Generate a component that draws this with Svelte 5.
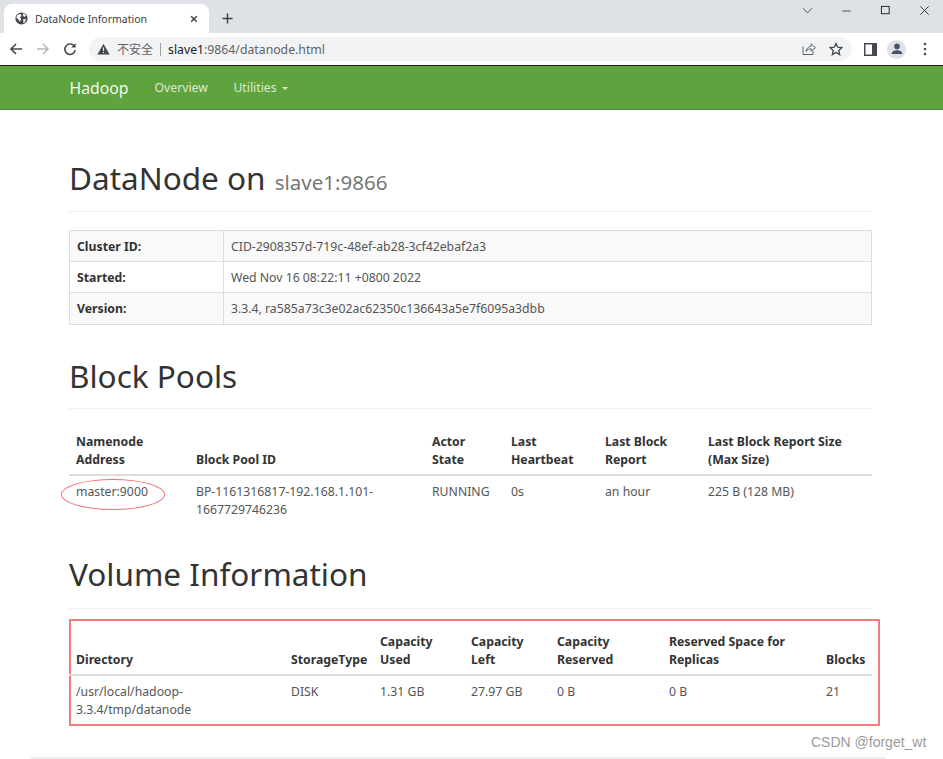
<script>
	const overview = [
		["Cluster ID:", "CID-2908357d-719c-48ef-ab28-3cf42ebaf2a3"],
		["Started:", "Wed Nov 16 08:22:11 +0800 2022"],
		["Version:", "3.3.4, ra585a73c3e02ac62350c136643a5e7f6095a3dbb"]
	];
	const poolHeads = ["Namenode Address", "Block Pool ID", "Actor State", "Last Heartbeat", "Last Block Report", "Last Block Report Size (Max Size)"];
	const poolRow = ["master:9000", "BP-1161316817-192.168.1.101-1667729746236", "RUNNING", "0s", "an hour", "225 B (128 MB)"];
	const volumeHeads = ["Directory", "StorageType", "Capacity Used", "Capacity Left", "Capacity Reserved", "Reserved Space for Replicas", "Blocks"];
	const volumeRow = ["/usr/local/hadoop-3.3.4/tmp/datanode", "DISK", "1.31 GB", "27.97 GB", "0 B", "0 B", "21"];
</script>

<div class="tabstrip">
	<div class="tab">
		<svg class="globe" viewBox="0 0 16 16" width="13" height="13"><circle cx="8" cy="8" r="7.5" fill="#45494e"/><path d="M3 3.5 7 2.5 8 5 6 6.5 7.5 8.5 6 12 4 9 1.5 7ZM10 1.5 13.5 4 12 6 10 5ZM10 9 13.5 8.5 12.5 12 10.5 14Z" fill="#fff"/></svg>
		<span class="tab-title">DataNode Information</span>
		<svg class="tab-x" viewBox="0 0 10 10" width="8" height="8"><path d="M1.5 1.5 8.5 8.5M8.5 1.5 1.5 8.5" stroke="#3c4043" stroke-width="1.8"/></svg>
	</div>
	<svg class="plus" viewBox="0 0 12 12" width="11" height="11"><path d="M6 .5V11.5M.5 6H11.5" stroke="#3c4043" stroke-width="1.6"/></svg>
	<div class="window-btns">
		<svg viewBox="0 0 12 12" width="11" height="11"><path d="M1 3.5 6 8.5 11 3.5" fill="none" stroke="#45494e" stroke-width="1"/></svg>
		<svg viewBox="0 0 12 12" width="11" height="11"><path d="M1.5 6.5H10.5" stroke="#55595e" stroke-width="1.2"/></svg>
		<svg viewBox="0 0 12 12" width="11" height="11"><rect x="1.5" y="1.5" width="8.5" height="8" fill="none" stroke="#1c1c1c" stroke-width="1"/></svg>
		<svg viewBox="0 0 12 12" width="11" height="11"><path d="M1.5 1.5 10.5 10.5M10.5 1.5 1.5 10.5" stroke="#2c2c2c" stroke-width="1"/></svg>
	</div>
</div>

<div class="toolbar">
	<svg class="nav-icon" viewBox="0 0 14 14" width="14" height="14"><path d="M13 7H2M7 2 2 7 7 12" fill="none" stroke="#45494e" stroke-width="1.6"/></svg>
	<svg class="nav-icon" viewBox="0 0 14 14" width="14" height="14"><path d="M1 7H12M7 2 12 7 7 12" fill="none" stroke="#b4b7bb" stroke-width="1.6"/></svg>
	<svg class="nav-icon" viewBox="0 0 14 14" width="14" height="14"><path d="M11.5 4.5A5.2 5.2 0 1 0 12.2 8" fill="none" stroke="#45494e" stroke-width="1.6"/><path d="M12.6 1.2V5.6H8.2Z" fill="#45494e"/></svg>
	<div class="omnibox">
		<svg viewBox="0 0 14 13" width="13" height="12"><path d="M7 .8 13.6 12.4H.4Z" fill="#45494e"/><path d="M7 4.8V8.4M7 9.4V10.8" stroke="#f1f3f4" stroke-width="1.2"/></svg>
		<span class="insecure">不安全</span>
		<span class="sep"></span>
		<span class="url"><b>slave1</b>:9864/datanode.html</span>
		<span class="grow"></span>
		<svg viewBox="0 0 14 14" width="14" height="14"><path d="M1 4.5V12.5H11V9M4 9.5C4.5 6 7 4.3 9 4.3V1.8L13.5 5.6 9 9.2V6.8C7 6.8 5.2 7.6 4 9.5Z" fill="none" stroke="#5f6368" stroke-width="1"/></svg>
		<svg class="star" viewBox="0 0 14 14" width="14" height="14"><path d="M7 1.4 8.7 5.2 12.9 5.6 9.8 8.4 10.7 12.6 7 10.4 3.3 12.6 4.2 8.4 1.1 5.6 5.3 5.2Z" fill="none" stroke="#45494e" stroke-width="1.3"/></svg>
	</div>
	<svg class="panel" viewBox="0 0 13 13" width="13" height="13"><rect x=".75" y=".75" width="11.5" height="11.5" fill="#fff" stroke="#45494e" stroke-width="1.5"/><rect x="8" y="1" width="4.5" height="11" fill="#45494e"/></svg>
	<span class="avatar">
		<svg viewBox="0 0 14 14" width="14" height="14"><circle cx="7" cy="4.4" r="2.8" fill="#47536b"/><path d="M1.6 12C1.8 9.2 4.6 8.2 7 8.2S12.2 9.2 12.4 12Z" fill="#47536b"/></svg>
	</span>
	<svg class="dots" viewBox="0 0 4 14" width="4" height="14"><circle cx="2" cy="2" r="1.3" fill="#45494e"/><circle cx="2" cy="7" r="1.3" fill="#45494e"/><circle cx="2" cy="12" r="1.3" fill="#45494e"/></svg>
</div>

<nav class="navbar">
	<span class="brand">Hadoop</span>
	<span class="nav-link">Overview</span>
	<span class="nav-link">Utilities <i class="caret"></i></span>
</nav>

<main class="container">
	<div class="page-header first">
		<h1>DataNode on <small>slave1:9866</small></h1>
	</div>

	<table class="summary">
		<tbody>
			{#each overview as [label, value]}
				<tr><th>{label}</th><td>{value}</td></tr>
			{/each}
		</tbody>
	</table>

	<div class="page-header second">
		<h1>Block Pools</h1>
	</div>

	<table class="data pools">
		<thead>
			<tr>
				{#each poolHeads as head}<th>{head}</th>{/each}
			</tr>
		</thead>
		<tbody>
			<tr>
				{#each poolRow as cell, i}
					<td>
						{cell}
						{#if i === 0}
							<span class="ring"></span>
						{/if}
					</td>
				{/each}
			</tr>
		</tbody>
	</table>

	<div class="page-header third">
		<h1>Volume Information</h1>
	</div>

	<div class="marked">
		<table class="data volumes">
			<thead>
				<tr>
					{#each volumeHeads as head}<th>{head}</th>{/each}
				</tr>
			</thead>
			<tbody>
				<tr>
					{#each volumeRow as cell}<td>{cell}</td>{/each}
				</tr>
			</tbody>
		</table>
	</div>
</main>

<div class="page-end"></div>

<span class="watermark">CSDN @forget_wt</span>

<style>
	:global(html),
	:global(body) {
		margin: 0;
		height: 100%;
		overflow: hidden;
		background: #fff;
	}

	:global(#app) {
		font-family: "Noto Sans", "Noto Sans CJK SC", sans-serif;
		color: #333;
	}

	.tabstrip {
		height: 33px;
		background: #dee1e6;
		display: flex;
		align-items: flex-start;
		box-sizing: border-box;
		padding-left: 4px;
	}

	.tab {
		width: 205px;
		height: 29px;
		margin-top: 4px;
		padding: 0 11px;
		box-sizing: border-box;
		background: #fff;
		border-radius: 8px 8px 0 0;
		display: flex;
		align-items: center;
		font-size: 10.5px;
		color: #3c4043;
	}

	.tab-title {
		margin-left: 7px;
		flex: 1;
	}

	.plus {
		margin: 13px 0 0 13px;
	}

	.window-btns {
		margin-left: auto;
		margin-top: 5px;
		width: 141.5px;
		display: flex;
		justify-content: space-between;
		padding-right: 13.5px;
		box-sizing: border-box;
	}

	.toolbar {
		height: 32px;
		background: #fff;
		display: flex;
		align-items: center;
		box-sizing: border-box;
		padding-left: 9px;
	}

	.nav-icon {
		margin-right: 13px;
	}

	.nav-icon:nth-child(3) {
		margin-right: 12px;
	}

	.omnibox {
		width: 763px;
		height: 24px;
		border-radius: 12px;
		background: #f1f3f4;
		display: flex;
		align-items: center;
		box-sizing: border-box;
		padding: 0 9px 0 8px;
		font-size: 12.25px;
		color: #5f6368;
	}

	.insecure {
		margin-left: 7px;
		font-size: 12px;
	}

	.sep {
		width: 1px;
		height: 13px;
		background: #9aa0a6;
		margin: 0 7px;
	}

	.url b {
		font-weight: 400;
		color: #202124;
	}

	.grow {
		flex: 1;
	}

	.star {
		margin-left: 13px;
	}

	.panel {
		margin-left: 12px;
	}

	.avatar {
		margin-left: 10px;
		width: 19px;
		height: 19px;
		border-radius: 50%;
		background: #dfe1e7;
		display: flex;
		align-items: center;
		justify-content: center;
	}

	.dots {
		margin-left: 17px;
	}

	.navbar {
		height: 45px;
		box-sizing: border-box;
		background: #5fa33e;
		border-top: 1px solid #1d1d1d;
		border-bottom: 1px solid #5a7f4a;
		display: flex;
		align-items: center;
		padding-left: 69.5px;
		color: #dcebd3;
		font-size: 12.25px;
	}

	.brand {
		font-size: 15.75px;
		color: #f4f9f1;
		margin-right: 26px;
	}

	.nav-link {
		margin-right: 25.5px;
	}

	.caret {
		display: inline-block;
		border-top: 3.5px solid #dcebd3;
		border-left: 3.5px solid transparent;
		border-right: 3.5px solid transparent;
		vertical-align: middle;
		margin-left: 2px;
	}

	.container {
		margin-left: 69px;
		width: 803px;
	}

	.page-header {
		border-bottom: 1px solid #eee;
		margin-bottom: 17px;
	}

	.page-header.first {
		margin-top: 50px;
		padding-bottom: 11px;
		margin-bottom: 18px;
	}

	.page-header.second {
		margin-top: 33px;
		padding-bottom: 15px;
	}

	.page-header.third {
		margin-top: 31px;
		padding-bottom: 17px;
		margin-bottom: 10px;
	}

	h1 {
		margin: 0;
		font-size: 31.5px;
		font-weight: 400;
		line-height: 35px;
		color: #333;
	}

	small {
		font-size: 20.5px;
		color: #777;
		margin-left: 1px;
	}

	table {
		width: 803px;
		border-collapse: collapse;
		table-layout: fixed;
		font-size: 12.25px;
		line-height: 17.5px;
	}

	td {
		color: #555;
	}

	.summary th,
	.summary td {
		border: 1px solid #ddd;
		padding: 6.5px 7px 6px;
		text-align: left;
	}

	.summary tr:last-child th,
	.summary tr:last-child td {
		padding-top: 7px;
		padding-bottom: 6.5px;
	}

	.summary th {
		width: 139px;
		font-weight: 700;
	}

	.summary tr:nth-child(odd) {
		background: #f9f9f9;
	}

	.data th {
		padding: 7px 7px 6px;
		text-align: left;
		vertical-align: bottom;
		font-weight: 700;
		border-bottom: 2px solid #ddd;
	}

	.data td {
		padding: 7px;
		vertical-align: top;
		position: relative;
		overflow-wrap: anywhere;
	}

	.pools th:nth-child(1) { width: 106px; }
	.pools th:nth-child(2) { width: 222px; }
	.pools th:nth-child(3) { width: 65px; }
	.pools th:nth-child(4) { width: 80px; }
	.pools th:nth-child(5) { width: 89px; }

	.volumes th:nth-child(1) { width: 201px; }
	.volumes th:nth-child(2) { width: 75px; }
	.volumes th:nth-child(3) { width: 77px; }
	.volumes th:nth-child(4) { width: 72px; }
	.volumes th:nth-child(5) { width: 98px; }
	.volumes th:nth-child(6) { width: 143px; }

	.ring {
		position: absolute;
		left: -8px;
		top: 3px;
		width: 102px;
		height: 29px;
		border: 1px solid #ee6f76;
		border-radius: 50%;
	}

	.marked {
		width: 811px;
		height: 107px;
		box-sizing: border-box;
		border: 2px solid #f07c80;
		padding-top: 5px;
	}

	.marked table {
		margin-left: -2px;
	}

	.page-end {
		margin: 31px 58px 0 31px;
		height: 2px;
		background: #eeeeee;
		box-shadow: 0 -3px 3px #f8f8f8;
	}

	.watermark {
		position: absolute;
		left: 811px;
		top: 734px;
		font-family: "Liberation Sans", sans-serif;
		font-size: 14px;
		color: #9a9a9a;
	}
</style>
